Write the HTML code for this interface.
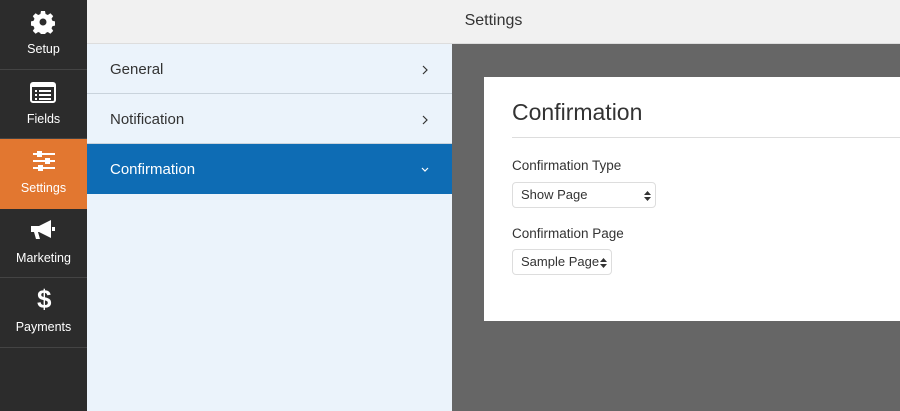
<!DOCTYPE html><html><head><style>
*{margin:0;padding:0;box-sizing:border-box}
body{width:900px;height:411px;overflow:hidden;font-family:"Liberation Sans",sans-serif;background:#666;position:relative}
.sb{position:absolute;left:0;top:0;width:87px;height:411px;background:#2c2c2c}
.it{height:69.5px;border-bottom:1px solid #444;color:#fff;font-size:12.5px;text-align:center;position:relative}
.it span{position:absolute;left:0;right:0;top:42px}
.it svg{position:absolute;left:31px;top:10px}
.on{background:#e27730;border-bottom-color:#e27730}
.hd{position:absolute;left:87px;top:0;right:0;height:44px;background:#f1f1f1;border-bottom:1px solid #ddd;text-align:center;line-height:42px;font-size:16px;color:#333}
.mp{position:absolute;left:87px;top:44px;width:365px;bottom:0;background:#ebf3fb}
.mi{height:50px;border-bottom:1px solid #c9d3dc;padding-left:23px;line-height:52px;font-size:15px;color:#333;position:relative}
.mi svg{position:absolute;right:24px;top:21px}
.mi.a{background:#0e6cb4;color:#fff;border:none}
.card{position:absolute;left:484px;top:77px;width:416px;height:244px;background:#fff}
h1{font-weight:normal;font-size:23px;color:#333;position:absolute;left:28px;top:22px}
.ln{position:absolute;left:28px;right:0;top:60px;border-top:1px solid #ddd}
.lb{position:absolute;left:28px;font-size:13.5px;color:#333}
.sel{position:absolute;left:28px;height:26px;border:1px solid #ddd;border-radius:4px;font-size:13px;color:#333;padding-left:8px;line-height:24px}
.sel svg{position:absolute;right:4px;top:8px}
</style></head><body>
<div class="sb">
<div class="it"><svg width="24" height="24" viewBox="0 0 24 24"><path fill="#fff" d="M10 1h4l.6 3 2.2 1 2.6-1.7 2.8 2.8-1.7 2.6 1 2.2 3 .6v4l-3 .6-1 2.2 1.7 2.6-2.8 2.8-2.6-1.7-2.2 1-.6 3h-4l-.6-3-2.2-1-2.6 1.7-2.8-2.8 1.7-2.6-1-2.2-3-.6v-4l3-.6 1-2.2-1.7-2.6 2.8-2.8 2.6 1.7 2.2-1zM12 8.5a3.5 3.5 0 100 7 3.5 3.5 0 000-7z"/></svg><span>Setup</span></div>
<div class="it"><svg width="26" height="22" viewBox="0 0 26 22" style="left:30px;top:12px"><rect x="1" y="1" width="24" height="19" rx="2" fill="none" stroke="#fff" stroke-width="2"/><rect x="1" y="1" width="24" height="4" fill="#fff"/><path stroke="#fff" stroke-width="2" d="M5 9h2M9 9h12M5 13h2M9 13h12M5 17h2M9 17h12"/></svg><span>Fields</span></div>
<div class="it on"><svg width="24" height="22" viewBox="0 0 24 22" style="left:32px;top:12px"><path stroke="#fff" stroke-width="2" d="M1 3h22M1 10h22M1 17h22"/><rect x="5" y="0" width="5" height="6" fill="#fff"/><rect x="13" y="7" width="5" height="6" fill="#fff"/><rect x="6" y="14" width="5" height="6" fill="#fff"/></svg><span>Settings</span></div>
<div class="it"><svg width="26" height="24" viewBox="0 0 26 24" style="left:30px;top:10px"><path fill="#fff" d="M1 7h8l12-6v18L9 13H8l2 7H6l-2-7H1zM22 8h3v4h-3z"/></svg><span>Marketing</span></div>
<div class="it"><svg width="16" height="26" viewBox="0 0 16 26" style="left:36px;top:8px"><text x="1" y="22" fill="#fff" font-size="26" font-weight="bold" font-family="Liberation Sans">$</text></svg><span>Payments</span></div>
</div>
<div class="hd">Settings</div>
<div class="mp">
<div class="mi">General<svg width="6" height="10" viewBox="0 0 6 10"><path d="M1 1l4 4-4 4" fill="none" stroke="#333" stroke-width="1.2"/></svg></div>
<div class="mi">Notification<svg width="6" height="10" viewBox="0 0 6 10"><path d="M1 1l4 4-4 4" fill="none" stroke="#333" stroke-width="1.2"/></svg></div>
<div class="mi a">Confirmation<svg width="10" height="6" viewBox="0 0 10 6" style="top:23px;right:22px"><path d="M2 1l3 3 3-3" fill="none" stroke="#fff" stroke-width="1.2"/></svg></div>
</div>
<div class="card"><h1>Confirmation</h1><div class="ln"></div>
<div class="lb" style="top:81px">Confirmation Type</div>
<div class="sel" style="top:105px;width:144px">Show Page<svg width="7" height="10" viewBox="0 0 7 10"><path d="M3.5 0L7 4H0zM3.5 10L0 6h7z" fill="#333"/></svg></div>
<div class="lb" style="top:149px">Confirmation Page</div>
<div class="sel" style="top:172px;width:100px">Sample Page<svg width="7" height="10" viewBox="0 0 7 10"><path d="M3.5 0L7 4H0zM3.5 10L0 6h7z" fill="#333"/></svg></div>
</div>
</body></html>
